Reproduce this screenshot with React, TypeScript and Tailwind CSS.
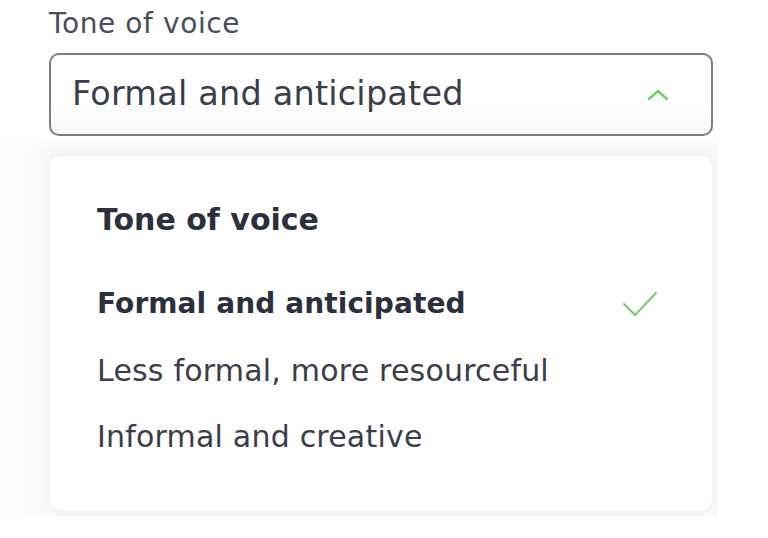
import React, { useState } from 'react';

const options = [
  'Formal and anticipated',
  'Less formal, more resourceful',
  'Informal and creative',
];

export default function App() {
  const [selected, setSelected] = useState(options[0]);
  const [open, setOpen] = useState(true);

  return (
    <div className="min-h-[538px] w-[768px] bg-white font-['DejaVu_Sans',sans-serif] text-[#2c2f3d]">
      <div className="pl-[49px] pt-[8px] w-[714px]">
        <label className="block text-[28px] leading-[32px] text-[#4a4d5a] tracking-[0.6px]">Tone of voice</label>

        {/* Select trigger */}
        <button
          onClick={() => setOpen(!open)}
          className="mt-[13px] w-[664px] h-[83px] border-2 border-[#7a7d88] rounded-[10px] bg-[linear-gradient(to_bottom,#ffffff_60%,#f7f7f7)] flex items-center justify-between pl-[21px] pr-[42px]"
        >
          <span className="text-[33.5px] text-[#3a3d4a] tracking-[0.2px]">{selected}</span>
          <svg width="22" height="12" viewBox="0 0 22 12" fill="none">
            <path d="M2 10 L11 2 L20 10" stroke="#6fcf6f" strokeWidth="2.5" strokeLinecap="round" strokeLinejoin="round" />
          </svg>
        </button>
      </div>

      {/* Dropdown backdrop + panel */}
      {open && (
        <div className="w-[718px] bg-[linear-gradient(to_right,#ffffff,#f8f8f8_45px)]">
          <div className="pt-[20px] pb-[6px] pl-[50px] bg-[linear-gradient(to_bottom,#ffffff,transparent_14px)]">
            <div className="w-[662px] h-[354px] bg-white rounded-[10px] shadow-[0_0_10px_rgba(0,0,0,0.05)] pl-[47px] pr-[54px] pt-[40px]">
              <h3 className="text-[30px] leading-[48px] font-bold">Tone of voice</h3>
              <ul className="mt-[36px] flex flex-col gap-[18px]">
                {options.map(o => (
                  <li
                    key={o}
                    onClick={() => setSelected(o)}
                    className={`flex items-center justify-between h-[48px] cursor-pointer ${o === selected ? 'font-bold text-[28px] tracking-[0.1px]' : 'text-[30px] text-[#3a3d4a] tracking-[0.2px]'}`}
                  >
                    <span>{o}</span>
                    {o === selected && (
                      <svg width="36" height="26" viewBox="0 0 36 26" fill="none">
                        <path d="M2 13 L13 24 L34 2" stroke="#72d072" strokeWidth="2.2" strokeLinecap="round" strokeLinejoin="round" />
                      </svg>
                    )}
                  </li>
                ))}
              </ul>
            </div>
          </div>
        </div>
      )}
    </div>
  );
}
